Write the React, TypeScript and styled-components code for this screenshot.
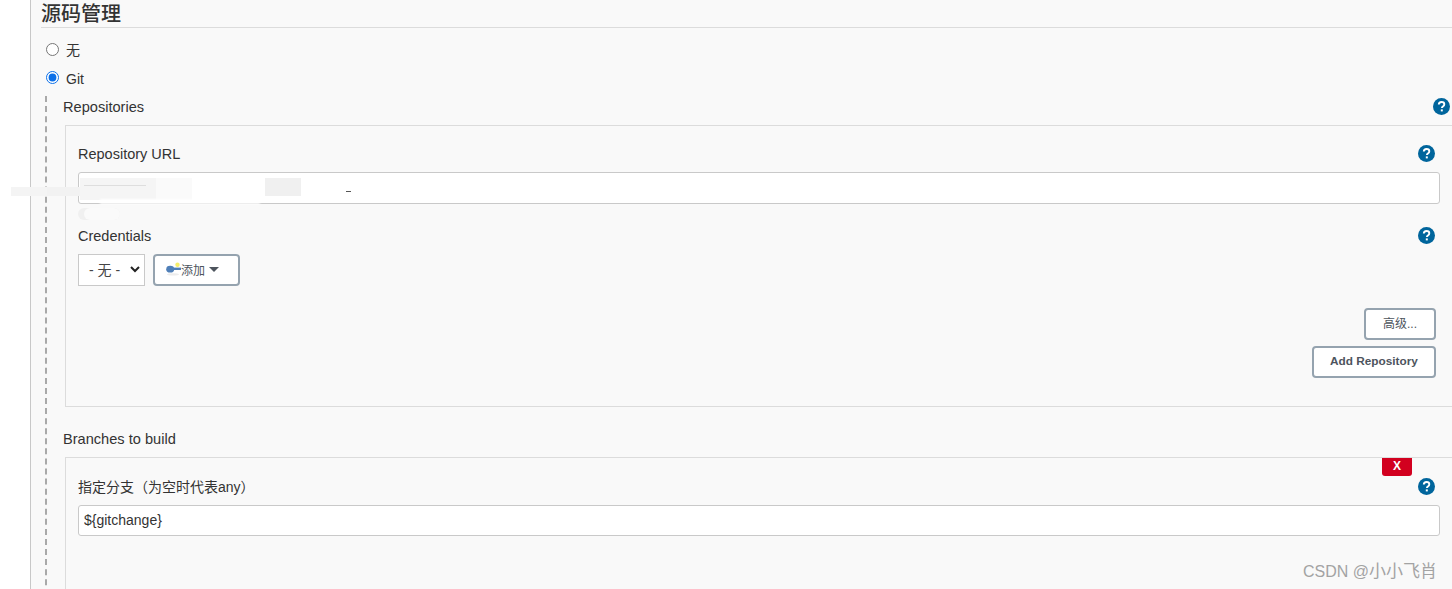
import React from "react";
import styled, { createGlobalStyle } from "styled-components";

const Global = createGlobalStyle`
  html, body { margin: 0; padding: 0; background: #fff; }
  body { font-family: "Liberation Sans", "Noto Sans CJK SC", sans-serif; color: #333; }
`;
const FONT = `"Liberation Sans", "Noto Sans CJK SC", sans-serif`;

const Page = styled.div`
  position: relative;
  width: 1452px;
  height: 589px;
  overflow: hidden;
  padding-left: 30px;
  box-sizing: border-box;
`;
const Main = styled.main`
  height: 100%;
  border-left: 1px solid #c8c8c8;
  background: #f9f9f9;
  padding-left: 10px;
`;
const Heading = styled.h2`
  margin: 0;
  height: 28px;
  box-sizing: border-box;
  border-bottom: 1px solid #dcdcdc;
  padding-top: 2px;
  font-size: 20px;
  font-weight: 500;
  line-height: 25px;
  color: #333;
  font-family: ${FONT};
`;
const Options = styled.div`
  padding: 8px 0 0 5px;
  display: flex;
  flex-direction: column;
`;
const OptionRow = styled.label`
  height: 28px;
  display: flex;
  align-items: center;
  gap: 7px;
  font-size: 14px;
  color: #333;
`;
const OptionText = styled.span<{ $up?: boolean }>`
  margin: ${(p) => (p.$up ? "0 0 2px" : "2px 0 0")};
`;
const Radio = styled.input.attrs({ type: "radio" })`
  margin: 0 0 2px 0;
  width: 13px;
  height: 13px;
  accent-color: #0b6fe8;
`;
const Nested = styled.div`
  margin: 4px 0 0 -1px;
  height: 600px;
  border-left: 2px dashed #a9a9a9;
  padding-left: 16px;
`;
const SectionHead = styled.div`
  height: 22px;
  display: flex;
  align-items: center;
  justify-content: space-between;
  font-size: 14.6px;
  color: #333;
  padding-right: 2px;
`;
const Box = styled.section<{ $height: number }>`
  position: relative;
  margin: 7px 0 0 2px;
  height: ${(p) => p.$height}px;
  box-sizing: border-box;
  border: 1px solid #dcdcdc;
  border-width: 1px 0 1px 1px;
  padding: 0 12px 0 12px;
`;
const FieldHead = styled.div<{ $top?: number }>`
  margin-top: ${(p) => p.$top ?? 0}px;
  height: 20px;
  display: flex;
  align-items: center;
  justify-content: space-between;
  font-size: 14.5px;
  color: #333;
  padding-right: 5px;
`;
const CjkLabel = styled.span`
  font-size: 14px;
  margin-bottom: 2px;
`;
const TextField = styled.input<{ $height: number }>`
  display: block;
  margin-top: 8px;
  width: 1362px;
  height: ${(p) => p.$height}px;
  box-sizing: border-box;
  border: 1px solid #c9c9c9;
  border-radius: 3px;
  background: #fff;
  padding: 0 5px 2px;
  font: 14px ${FONT};
  color: #333;
  outline: none;
`;
const Controls = styled.div`
  margin-top: 8px;
  display: flex;
  gap: 8px;
`;
const SelectBox = styled.div`
  width: 67px;
  height: 32px;
  box-sizing: border-box;
  border: 1px solid #c9c9c9;
  background: #fff;
  display: flex;
  align-items: center;
  justify-content: space-between;
  padding: 0 3px 2px 10px;
  font-size: 14px;
  color: #444;
`;
const Button = styled.button<{ $width: number; $bold?: boolean }>`
  width: ${(p) => p.$width}px;
  height: 32px;
  box-sizing: border-box;
  border: 2px solid #95a3af;
  border-radius: 4px;
  background: #fff;
  color: #4d545d;
  font: ${(p) => (p.$bold ? 700 : 400)} ${(p) => (p.$bold ? 11.8 : 12)}px ${FONT};
  padding: 0 0 3px;
`;
const AddButton = styled(Button)`
  display: flex;
  align-items: center;
  padding: 0 0 2px 11px;
`;
const Caret = styled.span`
  margin-left: 4px;
  width: 0;
  height: 0;
  border: 5px solid transparent;
  border-top: 5px solid #4d545d;
  border-bottom: 0;
`;
const RightActions = styled.div`
  margin: 22px 4px 0 0;
  display: flex;
  flex-direction: column;
  align-items: flex-end;
  gap: 6px;
`;
const DeleteTab = styled.button`
  position: absolute;
  top: 0;
  left: 1316px;
  width: 30px;
  height: 18px;
  box-sizing: border-box;
  border: 0;
  border-radius: 0 0 3px 3px;
  background: #d2001f;
  color: #fff;
  font: 700 12px ${FONT};
  padding: 0 0 2px;
`;
const BranchSection = styled.div`
  margin-top: 21px;
`;
const Smudge = styled.div<{ $l: number; $t: number; $w: number; $h: number; $c: string; $r?: number; $blur?: number }>`
  position: absolute;
  left: ${(p) => p.$l}px;
  top: ${(p) => p.$t}px;
  width: ${(p) => p.$w}px;
  height: ${(p) => p.$h}px;
  background: ${(p) => p.$c};
  border-radius: ${(p) => p.$r ?? 0}px;
  filter: blur(${(p) => p.$blur ?? 0}px);
`;
const Watermark = styled.div`
  position: absolute;
  left: 1303px;
  top: 562px;
  font: 16px "Liberation Sans", "Noto Sans CJK SC", sans-serif;
  color: #a3a3a3;
  line-height: 20px;
  white-space: nowrap;
`;
const WatermarkName = styled.span`
  font-size: 17px;
`;
const HelpSvg = styled.svg`
  margin-bottom: 2px;
`;

const Help = () => (
  <HelpSvg width="17" height="17" viewBox="0 0 17 17" aria-hidden>
    <circle cx="8.5" cy="8.5" r="8.5" fill="#00659c" />
    <path d="M5.8 6.6c0-1.7 1.2-2.6 2.8-2.6s2.7.9 2.7 2.3c0 1.1-.6 1.7-1.4 2.2-.7.5-1 .8-1 1.6" fill="none" stroke="#fff" strokeWidth="1.9" />
    <rect x="7.8" y="11.4" width="2" height="2" fill="#fff" />
  </HelpSvg>
);
const Chevron = () => (
  <svg width="12" height="12" viewBox="0 0 12 12" aria-hidden>
    <path d="M2 4l4 4 4-4" fill="none" stroke="#222" strokeWidth="2" />
  </svg>
);
const KeyIcon = () => (
  <svg width="15" height="16" viewBox="0 0 15 16" aria-hidden>
    <circle cx="11.5" cy="3.8" r="2.2" fill="#f6ee6a" />
    <ellipse cx="7" cy="13.4" rx="6" ry="1.2" fill="#ececec" />
    <ellipse cx="4.2" cy="8.2" rx="4" ry="3.4" fill="#4f7fb8" />
    <rect x="6" y="6.6" width="9" height="2.4" fill="#4f7fb8" />
  </svg>
);

export default function App() {
  return (
    <Page>
      <Global />
      <Main>
        <Heading>源码管理</Heading>
        <Options>
          <OptionRow><Radio name="scm" /><OptionText $up>无</OptionText></OptionRow>
          <OptionRow><Radio name="scm" defaultChecked /><OptionText>Git</OptionText></OptionRow>
          <Nested>
            <SectionHead>Repositories<Help /></SectionHead>
            <Box $height={282}>
              <FieldHead $top={18}>Repository URL<Help /></FieldHead>
              <TextField $height={32} readOnly />
              <FieldHead $top={22}>Credentials<Help /></FieldHead>
              <Controls>
                <SelectBox>- 无 -<Chevron /></SelectBox>
                <AddButton $width={87}><KeyIcon />添加<Caret /></AddButton>
              </Controls>
              <RightActions>
                <Button $width={72}>高级...</Button>
                <Button $width={124} $bold>Add Repository</Button>
              </RightActions>
            </Box>
            <BranchSection>
              <SectionHead>Branches to build</SectionHead>
              <Box $height={300}>
                <DeleteTab>X</DeleteTab>
                <FieldHead $top={19}><CjkLabel>指定分支（为空时代表any）</CjkLabel><Help /></FieldHead>
                <TextField $height={31} readOnly value="${gitchange}" />
              </Box>
            </BranchSection>
          </Nested>
        </Options>
      </Main>
      <Smudge $l={11} $t={187} $w={70} $h={9} $c="#f4f4f4" />
      <Smudge $l={47} $t={187} $w={110} $h={9} $c="#f2f2f2" />
      <Smudge $l={80} $t={178} $w={76} $h={22} $c="#f5f5f5" />
      <Smudge $l={156} $t={178} $w={36} $h={22} $c="#fafafa" />
      <Smudge $l={265} $t={178} $w={36} $h={18} $c="#f0f0f0" />
      <Smudge $l={84} $t={185} $w={62} $h={1} $c="#dedede" />
      <Smudge $l={100} $t={199} $w={160} $h={5} $c="#ffffff" $blur={1} />
      <Smudge $l={78} $t={208} $w={42} $h={12} $c="#f0f0f0" $r={6} />
      <Smudge $l={84} $t={208} $w={36} $h={12} $c="#fafafa" $r={6} />
      <Smudge $l={346} $t={191} $w={5} $h={1} $c="#555555" />
      <Watermark>CSDN @<WatermarkName>小小飞肖</WatermarkName></Watermark>
    </Page>
  );
}
